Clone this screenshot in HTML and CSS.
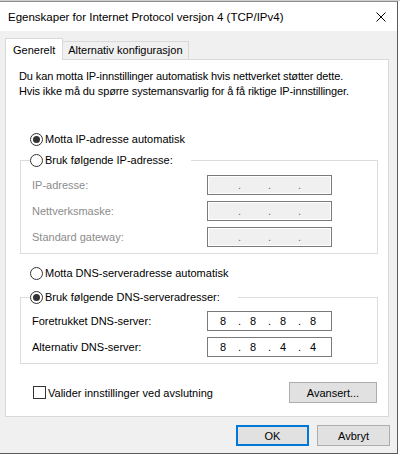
FILE: index.html
```html
<!DOCTYPE html>
<html lang="no">
<head>
  <meta charset="UTF-8">
  <title>Egenskaper for Internet Protocol versjon 4 (TCP/IPv4)</title>
  <link rel="stylesheet" href="styles.css">
</head>
<body>
  <div class="desk"></div>
  <div class="window">
    <div class="titlebar">
      <span class="title">Egenskaper for Internet Protocol versjon 4 (TCP/IPv4)</span>
      <svg class="close" width="10" height="10" viewBox="0 0 10 10">
        <path d="M0.5 0.5 L9.5 9.5 M9.5 0.5 L0.5 9.5" stroke="#000" stroke-width="1" fill="none"/>
      </svg>
    </div>

    <div class="client">
      <div class="tabs">
        <div class="tab active">Generelt</div>
        <div class="tab">Alternativ konfigurasjon</div>
      </div>

      <div class="panel">
        <p class="intro">Du kan motta IP-innstillinger automatisk hvis nettverket støtter dette.<br>Hvis ikke må du spørre systemansvarlig for å få riktige IP-innstillinger.</p>

        <label class="radio first"><span class="rb on"></span>Motta IP-adresse automatisk</label>

        <fieldset class="group ipgroup">
          <legend><label class="radio"><span class="rb"></span>Bruk følgende IP-adresse:</label></legend>
          <div class="row disabled">
            <span>IP-adresse:</span>
            <div class="ip"><span></span><i>.</i><span></span><i>.</i><span></span><i>.</i><span></span></div>
          </div>
          <div class="row disabled">
            <span>Nettverksmaske:</span>
            <div class="ip"><span></span><i>.</i><span></span><i>.</i><span></span><i>.</i><span></span></div>
          </div>
          <div class="row disabled">
            <span>Standard gateway:</span>
            <div class="ip"><span></span><i>.</i><span></span><i>.</i><span></span><i>.</i><span></span></div>
          </div>
        </fieldset>

        <label class="radio dnsauto"><span class="rb"></span>Motta DNS-serveradresse automatisk</label>

        <fieldset class="group dnsgroup">
          <legend><label class="radio"><span class="rb on"></span>Bruk følgende DNS-serveradresser:</label></legend>
          <div class="row">
            <span>Foretrukket DNS-server:</span>
            <div class="ip"><span>8</span><i>.</i><span>8</span><i>.</i><span>8</span><i>.</i><span>8</span></div>
          </div>
          <div class="row">
            <span>Alternativ DNS-server:</span>
            <div class="ip"><span>8</span><i>.</i><span>8</span><i>.</i><span>4</span><i>.</i><span>4</span></div>
          </div>
        </fieldset>

        <div class="options">
          <label class="check"><span class="cb"></span>Valider innstillinger ved avslutning</label>
          <button class="btn advanced">Avansert...</button>
        </div>
      </div>

      <div class="footer">
        <button class="btn default">OK</button>
        <button class="btn">Avbryt</button>
      </div>
    </div>
  </div>
</body>
</html>
```

FILE: styles.css
```css
* {
  box-sizing: border-box;
}

body {
  margin: 0;
  width: 400px;
  height: 456px;
  overflow: hidden;
  background: #fff;
  font-family: "Liberation Sans", Arial, sans-serif;
  font-size: 11px;
  color: #000;
}

.desk {
  height: 1px;
  background: #cfcfcf;
}

.window {
  width: 398px;
  background: #f0f0f0;
  border-top: 1px solid #8c8c8c;
  border-right: 1px solid #5b5b5b;
  border-bottom: 1px solid #5b5b5b;
}

.titlebar {
  height: 29px;
  background: #fff;
  display: flex;
  align-items: center;
  justify-content: space-between;
  padding: 0 11px 0 8px;
}
.title {
  font-size: 11.5px;
}

.client {
  height: 422px;
  padding: 7px 8px 0 5px;
}

/* tabs */
.tabs {
  display: flex;
  align-items: flex-end;
  height: 21px;
}
.tab {
  height: 18px;
  line-height: 15px;
  padding: 1px 5px 0 5px;
  border: 1px solid #d9d9d9;
  border-bottom: none;
  background: #f0f0f0;
  margin-left: -1px;
}
.tab.active {
  position: relative;
  height: 22px;
  margin-bottom: -1px;
  margin-left: 0;
  padding: 4px 7px 0 7px;
  background: #fff;
}

.panel {
  height: 358px;
  background: #fff;
  border: 1px solid #d9d9d9;
}

.intro {
  margin: 9px 0 0 13px;
  line-height: 15px;
  letter-spacing: -0.12px;
}

/* radio + checkbox */
.radio,
.check {
  display: flex;
  align-items: center;
  gap: 2px;
  height: 16px;
  white-space: nowrap;
}
.rb {
  width: 13px;
  height: 13px;
  border: 1px solid #333;
  border-radius: 50%;
  background: #fff;
  display: flex;
  align-items: center;
  justify-content: center;
}
.rb.on::after {
  content: "";
  width: 7px;
  height: 7px;
  border-radius: 50%;
  background: #333;
}
.cb {
  width: 13px;
  height: 13px;
  border: 1px solid #333;
  background: #fff;
}

.radio.first {
  margin: 32px 0 0 24px;
}
.radio.dnsauto {
  margin: 11px 0 0 24px;
}

/* group boxes */
.group {
  margin: 0 10px 0 14px;
  border: 1px solid #dcdcdc;
  min-width: 0;
  display: flex;
  flex-direction: column;
  gap: 6px;
}
.group legend {
  padding: 0 18px 0 0;
  margin-left: -2px;
}
.ipgroup {
  margin-top: 5px;
  padding: 7px 10px 6px 11px;
}
.dnsgroup {
  margin-top: 8px;
  padding: 6px 10px 6px 11px;
}

.row {
  display: grid;
  grid-template-columns: 175px 125px;
  align-items: center;
  height: 20px;
}
.row.disabled > span {
  color: #8c8c8c;
}

.ip {
  height: 20px;
  display: flex;
  align-items: center;
  padding-left: 3px;
  border: 1px solid #7a7a7a;
  background: #fff;
}
.ip span {
  width: 24px;
  text-align: center;
}
.ip i {
  font-style: normal;
  width: 6px;
  text-align: right;
}
.disabled .ip {
  background: #f0f0f0;
  box-shadow: inset 0 0 0 1px #fff;
}
.disabled .ip i {
  color: #6d6d6d;
}

/* bottom of the panel */
.options {
  display: flex;
  align-items: center;
  justify-content: space-between;
  height: 21px;
  margin: 18px 11px 0 27px;
}

.btn {
  font: inherit;
  color: #000;
  height: 21px;
  padding: 0;
  background: #e1e1e1;
  border: 1px solid #adadad;
}
.advanced {
  width: 88px;
}

.footer {
  display: flex;
  justify-content: flex-end;
  gap: 8px;
  margin: 8px -1px 0 0;
}
.footer .btn {
  width: 73px;
}
.btn.default {
  border: 2px solid #0078d7;
}
```
